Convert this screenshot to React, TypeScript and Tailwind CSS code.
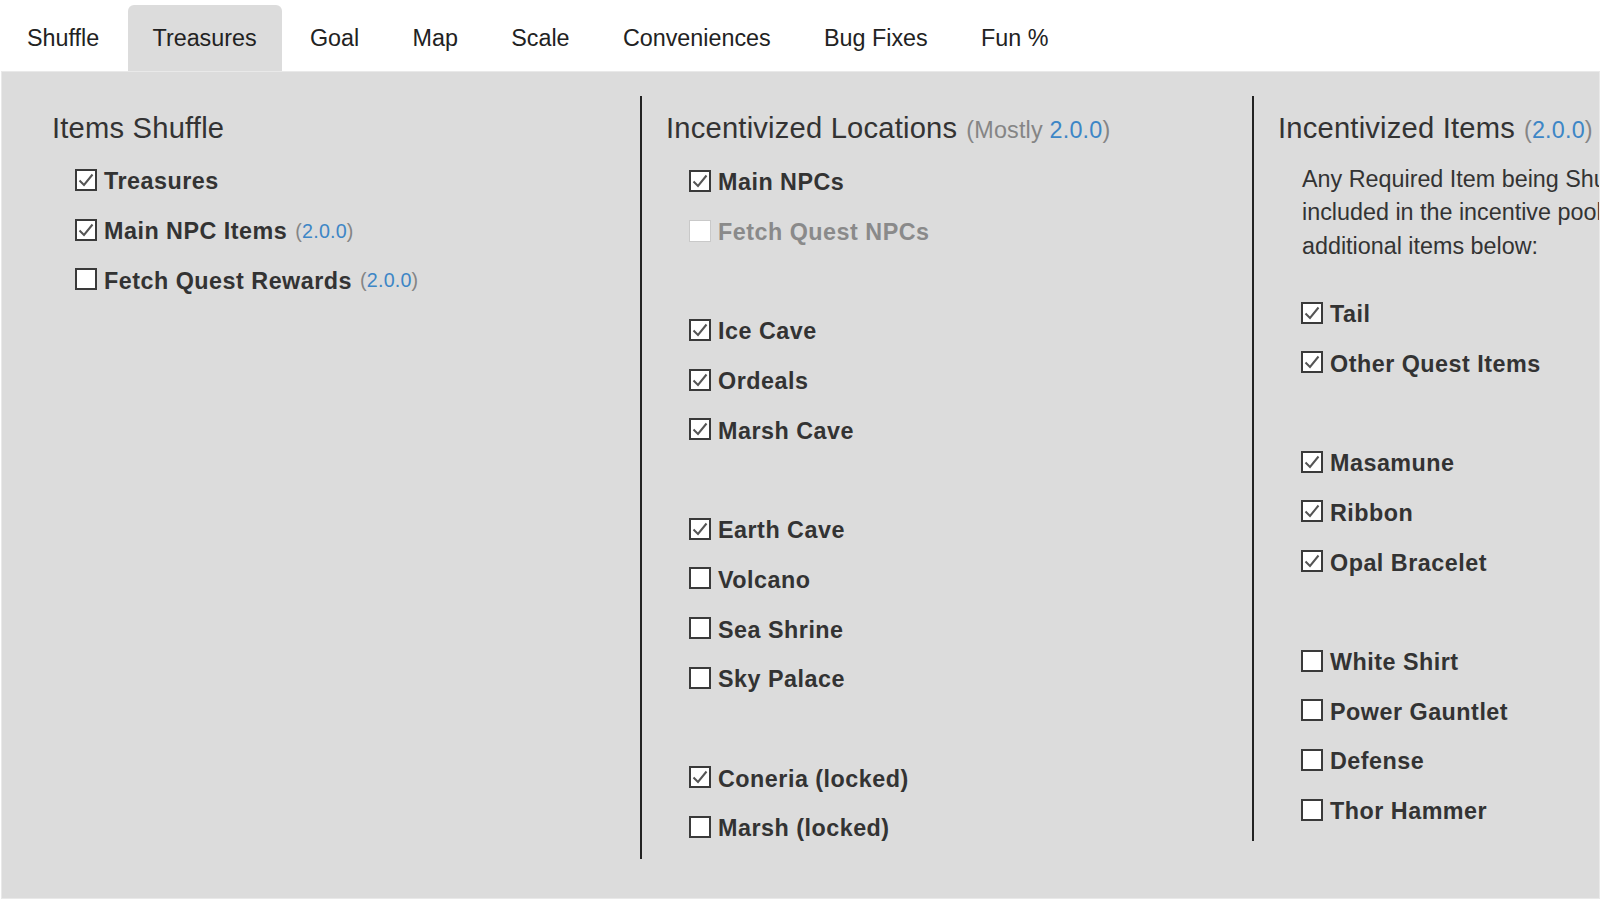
import React from "react";

type Item = { label: string; checked?: boolean; disabled?: boolean; version?: boolean } | null;

const TABS = ["Shuffle", "Treasures", "Goal", "Map", "Scale", "Conveniences", "Bug Fixes", "Fun %"];

const SHUFFLE: Item[] = [
  { label: "Treasures", checked: true },
  { label: "Main NPC Items", checked: true, version: true },
  { label: "Fetch Quest Rewards", version: true },
];

const LOCATIONS: Item[] = [
  { label: "Main NPCs", checked: true },
  { label: "Fetch Quest NPCs", disabled: true },
  null,
  { label: "Ice Cave", checked: true },
  { label: "Ordeals", checked: true },
  { label: "Marsh Cave", checked: true },
  null,
  { label: "Earth Cave", checked: true },
  { label: "Volcano" },
  { label: "Sea Shrine" },
  { label: "Sky Palace" },
  null,
  { label: "Coneria (locked)", checked: true },
  { label: "Marsh (locked)" },
];

const ITEMS: Item[] = [
  { label: "Tail", checked: true },
  { label: "Other Quest Items", checked: true },
  null,
  { label: "Masamune", checked: true },
  { label: "Ribbon", checked: true },
  { label: "Opal Bracelet", checked: true },
  null,
  { label: "White Shirt" },
  { label: "Power Gauntlet" },
  { label: "Defense" },
  { label: "Thor Hammer" },
];

function Version({ mostly }: { mostly?: boolean }) {
  return (
    <>
      <span className="text-[#858585]">({mostly ? "Mostly " : ""}</span>
      <span className="text-[#3d86c6]">2.0.0</span>
      <span className="text-[#858585]">)</span>
    </>
  );
}

function Box({ checked, disabled }: { checked?: boolean; disabled?: boolean }) {
  return (
    <span
      className={
        disabled
          ? "mb-[4px] flex h-[22px] w-[22px] shrink-0 items-center justify-center border-[1.5px] border-[#c9c9c9] bg-white"
          : "mb-[4px] flex h-[22px] w-[22px] shrink-0 items-center justify-center border-2 border-[#3a3a3a] bg-white"
      }
    >
      {checked && (
        <svg viewBox="0 0 18 18" className="h-[18px] w-[18px]">
          <path d="M2.5 9.5 L7 14 L15.5 3.5" fill="none" stroke="#555555" strokeWidth="2" />
        </svg>
      )}
    </span>
  );
}

function CheckList({ items }: { items: Item[] }) {
  return (
    <div className="flex flex-col pl-[23px]">
      {items.map((item, i) =>
        item ? (
          <div key={item.label} className="flex h-[49.7px] items-center">
            <Box checked={item.checked} disabled={item.disabled} />
            <span
              className={
                item.disabled
                  ? "ml-[7px] font-bold tracking-[0.5px] text-[#8a8a8a]"
                  : "ml-[7px] font-bold tracking-[0.5px] text-[#333333]"
              }
            >
              {item.label}
            </span>
            {item.version && (
              <span className="ml-[8px] text-[19.7px] tracking-[0.2px]">
                <Version />
              </span>
            )}
          </div>
        ) : (
          <div key={`gap-${i}`} className="h-[49.7px]" />
        )
      )}
    </div>
  );
}

export default function App() {
  return (
    <div
      className="h-screen w-full overflow-hidden bg-white pl-[1px] text-[23.33px] text-[#333333]"
      style={{ fontFamily: '"Liberation Sans", Arial, sans-serif' }}
    >
      <div className="flex h-[71px] items-end pl-[1px]">
        {TABS.map((tab) => (
          <div
            key={tab}
            className={
              tab === "Treasures"
                ? "mr-[3.3px] flex h-[66px] items-center rounded-t-[6px] bg-[#dcdcdc] px-[25px] text-[#222222]"
                : "mr-[3.3px] flex h-[66px] items-center rounded-t-[6px] px-[25px] text-[#222222]"
            }
          >
            {tab}
          </div>
        ))}
      </div>

      <div className="flex h-[828px] overflow-hidden border border-[#e9e9e9] bg-[#dcdcdc] pt-[24px] pl-[25px]">
        <div className="flex items-start">
          <div className="w-[613px] shrink-0 border-l-2 border-transparent pt-[16px] pb-[5px] pl-[23px]">
            <h2 className="text-[29.17px] leading-[32px] tracking-[0.2px]">Items Shuffle</h2>
            <div className="mt-[13px]">
              <CheckList items={SHUFFLE} />
            </div>
          </div>

          <div className="w-[612px] shrink-0 border-l-2 border-[#222222] pt-[16px] pb-[5px] pl-[24px]">
            <h2 className="whitespace-nowrap text-[29.17px] leading-[32px] tracking-[0.2px]">
              Incentivized Locations
              <span className="ml-[9px] text-[23.33px] tracking-[0.2px]">
                <Version mostly />
              </span>
            </h2>
            <div className="mt-[12px]">
              <CheckList items={LOCATIONS} />
            </div>
          </div>

          <div className="w-[612px] shrink-0 border-l-2 border-[#222222] pt-[16px] pb-[5px] pl-[24px]">
            <h2 className="whitespace-nowrap text-[29.17px] leading-[32px] tracking-[0.2px]">
              Incentivized Items
              <span className="ml-[9px] text-[23.33px] tracking-[0.2px]">
                <Version />
              </span>
            </h2>
            <p className="mt-[17px] whitespace-nowrap pl-[24px] leading-[33.3px]">
              Any Required Item being Shuffled will be
              <br />
              included in the incentive pool, along with the
              <br />
              additional items below:
            </p>
            <div className="mt-[27px]">
              <CheckList items={ITEMS} />
            </div>
          </div>
        </div>
      </div>
    </div>
  );
}
